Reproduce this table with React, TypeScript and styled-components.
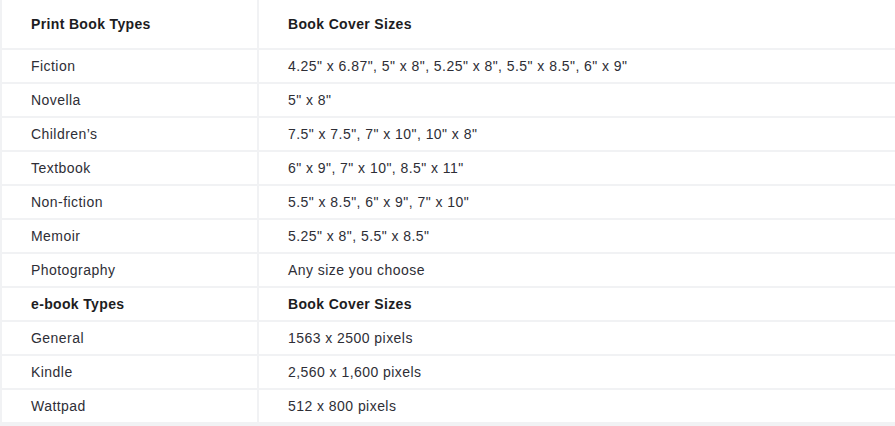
import React from 'react';
import styled, { createGlobalStyle } from 'styled-components'

const Global = createGlobalStyle`
    html, body{
        margin:0;
        padding:0;
        background:#f1f2f4;
        overflow:hidden;
    }
`

const Wrap = styled.div`
    width:895px;
    height:426px;
    overflow:hidden;
`

const Table = styled.table`
    border-collapse:separate;
    border-spacing:2px;
    margin-top:-2px;
    width:901px;
    table-layout:fixed;
    font-family:"Liberation Sans", Arial, sans-serif;
    font-size:14px;
`

const Cell = styled.td<{ $head?: boolean, $tall?: boolean }>`
    background:#fff;
    height:${p => p.$tall ? 48 : 32}px;
    padding:0 0 0 29px;
    box-sizing:border-box;
    vertical-align:middle;
    text-align:left;
    line-height:16px;
    color:${p => p.$head ? '#1d1d22' : '#2e2e36'};
    font-weight:${p => p.$head ? 700 : 400};
    letter-spacing:${p => p.$head ? '0.35px' : '0.45px'};
    white-space:nowrap;
`

const ColFirst = styled.col`
    width:255px;
`

type TRow = [string, string, boolean?]

const rows: TRow[] = [
    ['Fiction', '4.25" x 6.87", 5" x 8", 5.25" x 8", 5.5" x 8.5", 6" x 9"'],
    ['Novella', '5" x 8"'],
    ['Children\u2019s', '7.5" x 7.5", 7" x 10", 10" x 8"'],
    ['Textbook', '6" x 9", 7" x 10", 8.5" x 11"'],
    ['Non-fiction', '5.5" x 8.5", 6" x 9", 7" x 10"'],
    ['Memoir', '5.25" x 8", 5.5" x 8.5"'],
    ['Photography', 'Any size you choose'],
    ['e-book Types', 'Book Cover Sizes', true],
    ['General', '1563 x 2500 pixels'],
    ['Kindle', '2,560 x 1,600 pixels'],
    ['Wattpad', '512 x 800 pixels'],
]

const App = () => {
    return <>
        <Global />
        <Wrap>
            <Table>
                <colgroup>
                    <ColFirst />
                    <col />
                </colgroup>
                <tbody>
                    <tr>
                        <Cell $head $tall>Print Book Types</Cell>
                        <Cell $head $tall>Book Cover Sizes</Cell>
                    </tr>
                    {
                        rows.map(([a, b, head]) => <tr key={a}>
                            <Cell $head={head}>{a}</Cell>
                            <Cell $head={head}>{b}</Cell>
                        </tr>)
                    }
                </tbody>
            </Table>
        </Wrap>
    </>
}

export default App;
